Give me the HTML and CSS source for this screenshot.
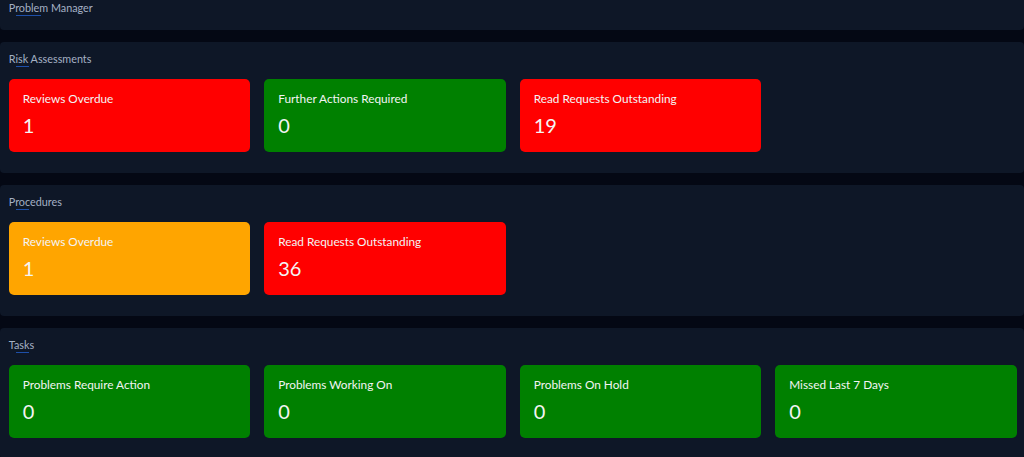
FILE: index.html
```html
<!DOCTYPE html>
<html lang="en">

<head>
    <meta charset="UTF-8">
    <meta name="viewport" content="width=device-width, initial-scale=1.0">
    <title>Problem Manager</title>
    <link rel="stylesheet" href="styles.css">
</head>

<body>
    <section class="panel panel-top">
        <h2 class="panel-title">Problem Manager</h2>
        <div class="title-line title-line-long"></div>
    </section>

    <section class="panel">
        <h2 class="panel-title">Risk Assessments</h2>
        <div class="title-line"></div>
        <div class="card-grid">
            <div class="card red">
                <div class="card-label">Reviews Overdue</div>
                <div class="card-value">1</div>
            </div>
            <div class="card green">
                <div class="card-label">Further Actions Required</div>
                <div class="card-value">0</div>
            </div>
            <div class="card red">
                <div class="card-label">Read Requests Outstanding</div>
                <div class="card-value">19</div>
            </div>
        </div>
    </section>

    <section class="panel">
        <h2 class="panel-title">Procedures</h2>
        <div class="title-line"></div>
        <div class="card-grid">
            <div class="card orange">
                <div class="card-label">Reviews Overdue</div>
                <div class="card-value">1</div>
            </div>
            <div class="card red">
                <div class="card-label">Read Requests Outstanding</div>
                <div class="card-value">36</div>
            </div>
        </div>
    </section>

    <section class="panel">
        <h2 class="panel-title">Tasks</h2>
        <div class="title-line"></div>
        <div class="card-grid">
            <div class="card green">
                <div class="card-label">Problems Require Action</div>
                <div class="card-value">0</div>
            </div>
            <div class="card green">
                <div class="card-label">Problems Working On</div>
                <div class="card-value">0</div>
            </div>
            <div class="card green">
                <div class="card-label">Problems On Hold</div>
                <div class="card-value">0</div>
            </div>
            <div class="card green">
                <div class="card-label">Missed Last 7 Days</div>
                <div class="card-value">0</div>
            </div>
        </div>
    </section>
</body>

</html>
```

FILE: styles.css
```css
* {
    margin: 0;
    padding: 0;
    box-sizing: border-box;
}

html,
body {
    height: 457px;
    overflow: hidden;
}

body {
    background-color: #040814;
    font-family: Lato, "Noto Sans", sans-serif;
    display: flex;
    flex-direction: column;
    gap: 12px;
}

.panel {
    background-color: #0e1727;
    border-radius: 4px;
    height: 131px;
    padding: 9px 7.25px 0 8.75px;
    flex-shrink: 0;
}

.panel-top {
    height: 30px;
    padding-top: 0;
    border-radius: 0 0 4px 4px;
}

.panel-title {
    font-size: 10.8px;
    line-height: 16px;
    font-weight: 400;
    color: #a4b0c4;
}

.title-line {
    width: 13px;
    height: 1px;
    margin: -1px 0 0 7px;
    background-color: #1e4fa8;
}

.title-line-long {
    width: 25px;
}

.card-grid {
    display: grid;
    grid-template-columns: repeat(4, 1fr);
    gap: 14px;
    margin-top: 12px;
}

.card {
    height: 73px;
    border-radius: 5px;
    padding: 12px 14px;
    color: #f4f4f4;
}

.red {
    background-color: #ff0000;
}

.green {
    background-color: #008000;
}

.orange {
    background-color: #ffa500;
}

.card-label {
    font-size: 11.8px;
    line-height: 16px;
}

.card-value {
    font-size: 20px;
    line-height: 28px;
    margin-top: 4px;
}
```
